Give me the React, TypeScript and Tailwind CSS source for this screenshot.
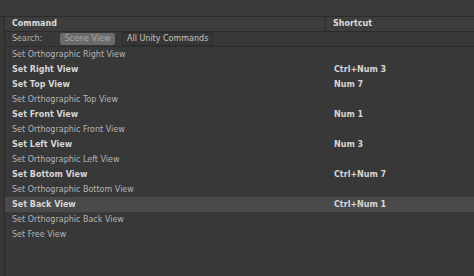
import React from 'react';

type Row = { name: string; shortcut?: string; bold?: boolean; selected?: boolean };

const rows: Row[] = [
  { name: 'Set Orthographic Right View' },
  { name: 'Set Right View', shortcut: 'Ctrl+Num 3', bold: true },
  { name: 'Set Top View', shortcut: 'Num 7', bold: true },
  { name: 'Set Orthographic Top View' },
  { name: 'Set Front View', shortcut: 'Num 1', bold: true },
  { name: 'Set Orthographic Front View' },
  { name: 'Set Left View', shortcut: 'Num 3', bold: true },
  { name: 'Set Orthographic Left View' },
  { name: 'Set Bottom View', shortcut: 'Ctrl+Num 7', bold: true },
  { name: 'Set Orthographic Bottom View' },
  { name: 'Set Back View', shortcut: 'Ctrl+Num 1', bold: true, selected: true },
  { name: 'Set Orthographic Back View' },
  { name: 'Set Free View' },
];

const App: React.FC = () => {
  return (
    <div
      className="w-[474px] h-[276px] overflow-hidden bg-[#383838] text-[8px] leading-[10px] flex flex-col"
      style={{ fontFamily: '"DejaVu Sans", Verdana, sans-serif' }}
    >
      <div className="h-[17px] shrink-0 bg-[#3a3a3a] border-b border-[#2b2b2b]" />
      <div className="flex-1 flex flex-col ml-[4px] border-l border-[#2b2b2b]">
        <div className="h-[15px] shrink-0 flex border-b border-[#2b2b2b] bg-[#3d3d3d]">
          <div className="w-[321px] pl-[7px] flex items-center font-bold text-[#dcdcdc] border-r border-[#2e2e2e]">
            Command
          </div>
          <div className="pl-[7px] flex items-center font-bold text-[#dcdcdc]">Shortcut</div>
        </div>
        <div className="h-[15px] shrink-0 flex items-center pl-[7px] border-b border-[#2e2e2e]">
          <span className="text-[#b0b0b0] w-[48px]">Search:</span>
          <span className="h-[12px] w-[55px] flex items-center justify-center rounded-[2px] bg-[#6b6b6b] text-[#a9a9a9]">
            Scene View
          </span>
          <span className="ml-[7px] h-[14px] px-[4px] flex items-center rounded-[2px] bg-[#363636] border border-[#2c2c2c] text-[#c4c4c4]">
            All Unity Commands
          </span>
        </div>
        {rows.map((r) => (
          <div
            key={r.name}
            className={`h-[15px] shrink-0 flex items-center ${r.selected ? 'bg-[#4a4a4a]' : ''}`}
          >
            <div
              className={`w-[322px] pl-[7px] ${
                r.bold ? 'font-bold text-[#d6d6d6]' : 'text-[#b4b4b4]'
              }`}
            >
              {r.name}
            </div>
            <div className="pl-[7px] font-bold text-[#d6d6d6]">{r.shortcut}</div>
          </div>
        ))}
      </div>
    </div>
  );
};

export default App;
